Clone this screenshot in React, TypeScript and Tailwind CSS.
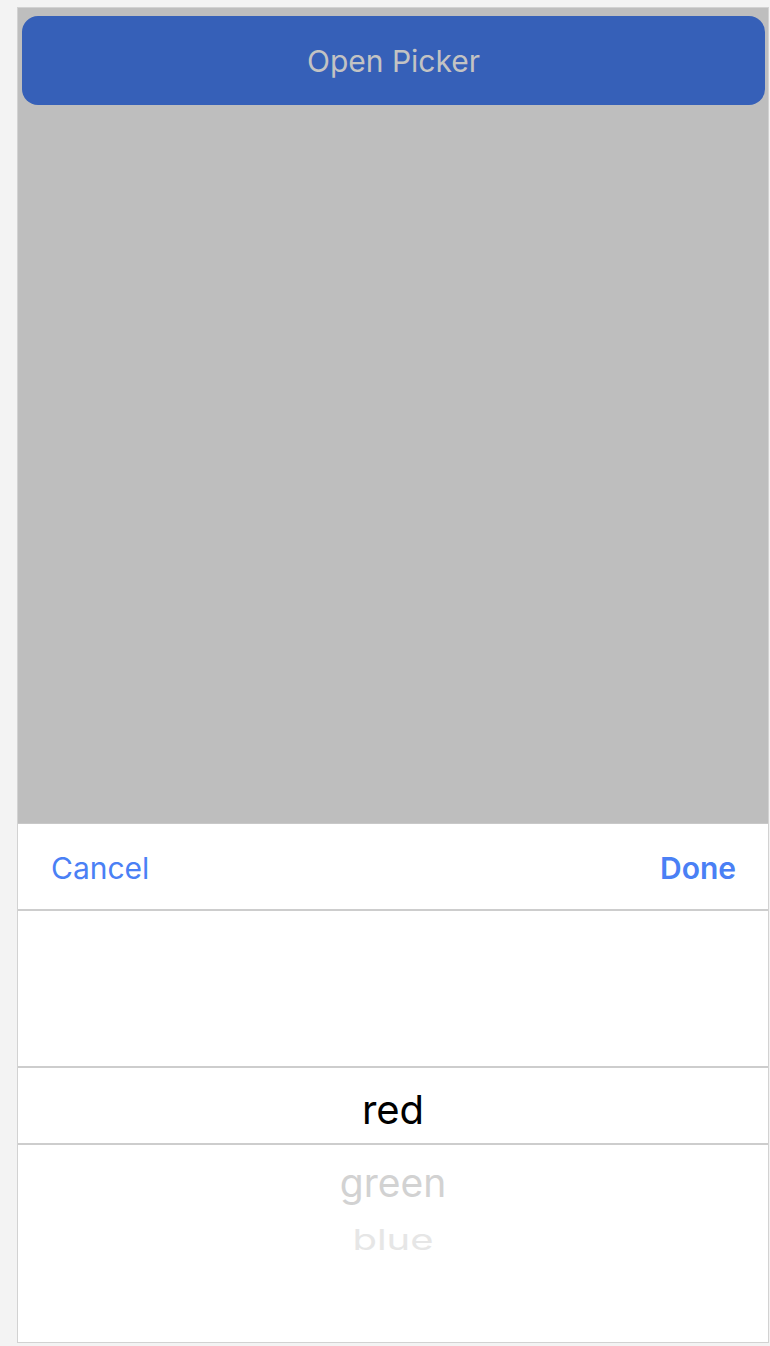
export default function App() {
  const font = { fontFamily: "Inter, 'Liberation Sans', sans-serif" };
  return (
    <div className="min-h-[1346px] w-[770px] bg-[#f3f3f3] pt-[7px] pl-[17px]" style={font}>
      <div className="flex h-[1336px] w-[752px] flex-col border border-[#d2d2d2] bg-white">
        {/* backdrop */}
        <div className="h-[815px] bg-[#bebebe] px-[4px] pt-[8px] pr-[3px]">
          <button className="flex h-[89px] w-full items-center justify-center rounded-[16px] bg-[#3660b8] pt-[2px] text-[30px] text-[#c3c3c3]">
            Open Picker
          </button>
        </div>

        {/* sheet */}
        <div className="flex flex-1 flex-col border-t border-[#c8c8c8]">
          <div className="flex h-[87px] items-center justify-between border-b-2 border-[#cdcdcd] pt-[4px] pl-[33px] pr-[32px] text-[30px] text-[#4a80f5]">
            <span>Cancel</span>
            <span className="font-semibold">Done</span>
          </div>
          <div className="flex flex-1 flex-col">
            <div className="h-[155px]" />
            <div className="flex h-[79px] items-center justify-center border-y-2 border-[#cdcdcd] pt-[9px] text-[40px] text-black">
              red
            </div>
            <div className="flex flex-col items-center">
              <div className="mt-[13px] text-[39px] leading-[50px] text-[#d2d2d2]">green</div>
              <div className="mt-[14px] origin-top scale-y-[0.72] text-[40px] leading-[50px] text-[#e6e6e6]">blue</div>
            </div>
          </div>
        </div>
      </div>
    </div>
  );
}
